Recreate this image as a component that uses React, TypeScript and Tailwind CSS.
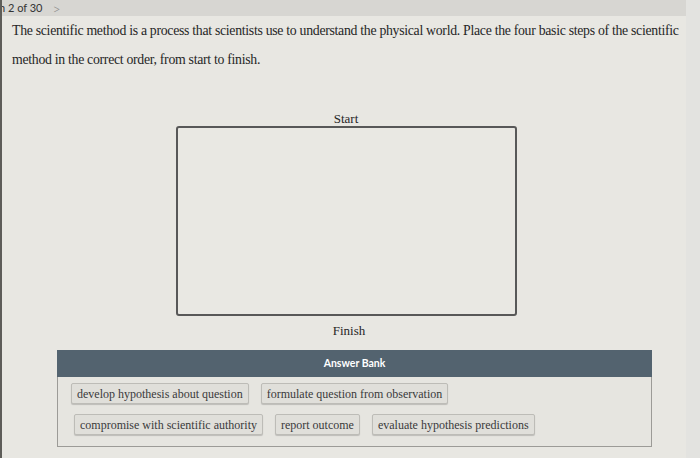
import React from "react";

const row1 = ["develop hypothesis about question", "formulate question from observation"];
const row2 = ["compromise with scientific authority", "report outcome", "evaluate hypothesis predictions"];

const Chip = ({label}: {label: string}) => (
    <div className="h-[21px] px-[5px] flex items-center rounded-[2px] border border-[#bdbcb7] bg-[#e0dfda] shadow-[0_1px_1px_rgba(0,0,0,0.18)] text-[12px] text-[#3a3a3a] whitespace-nowrap">
        {label}
    </div>
);

export default function App() {
    return (
        <div className="w-[700px] h-[458px] overflow-hidden flex bg-[#d7d6d2] font-['Liberation_Serif',serif]">
            <div className="w-[2px] bg-[#5e5d59]"/>
            <div className="w-[684px] flex flex-col">
                <div className="h-[16px] pt-[1px] flex items-center gap-[10px] overflow-hidden font-['Lato',sans-serif] text-[11px] text-[#333]">
                    <span className="-ml-[3px]">n 2 of 30</span>
                    <span className="text-[#888] text-[14px] font-light">&gt;</span>
                </div>
                <div className="flex-1 bg-[#e8e7e2] pl-[10px] pr-[4px] flex flex-col text-[#262626]">
                    <p className="text-[13.8px] leading-[29px] tracking-[-0.3px]">
                        The scientific method is a process that scientists use to understand the physical world. Place the four basic steps of the scientific method in the correct order, from start to finish.
                    </p>
                    <div className="flex flex-col items-center mt-[38px] pr-[2px] text-[13px]">
                        <div className="leading-[14px]">Start</div>
                        <div className="w-[341px] h-[190px] rounded-[3px] border-2 border-[#585858] bg-[#e9e8e3]"/>
                        <div className="mt-[8px] leading-[14px] ml-[6px]">Finish</div>
                    </div>
                    <div className="mt-[12px] ml-[45px] w-[595px] flex flex-col">
                        <div className="h-[27px] bg-[#53636f] flex items-center justify-center font-['Lato',sans-serif] font-bold text-[10.5px] text-white">
                            Answer Bank
                        </div>
                        <div className="border border-t-0 border-[#9c9b97] bg-[#e6e5e0] pt-[6px] pb-[11px] pl-[13px] flex flex-col gap-[10px]">
                            <div className="flex gap-[12px]">
                                {row1.map(l => <Chip key={l} label={l}/>)}
                            </div>
                            <div className="flex gap-[12px] pl-[3px]">
                                {row2.map(l => <Chip key={l} label={l}/>)}
                            </div>
                        </div>
                    </div>
                </div>
            </div>
            <div className="flex-1 bg-[#e3e3e0]"/>
        </div>
    );
}
